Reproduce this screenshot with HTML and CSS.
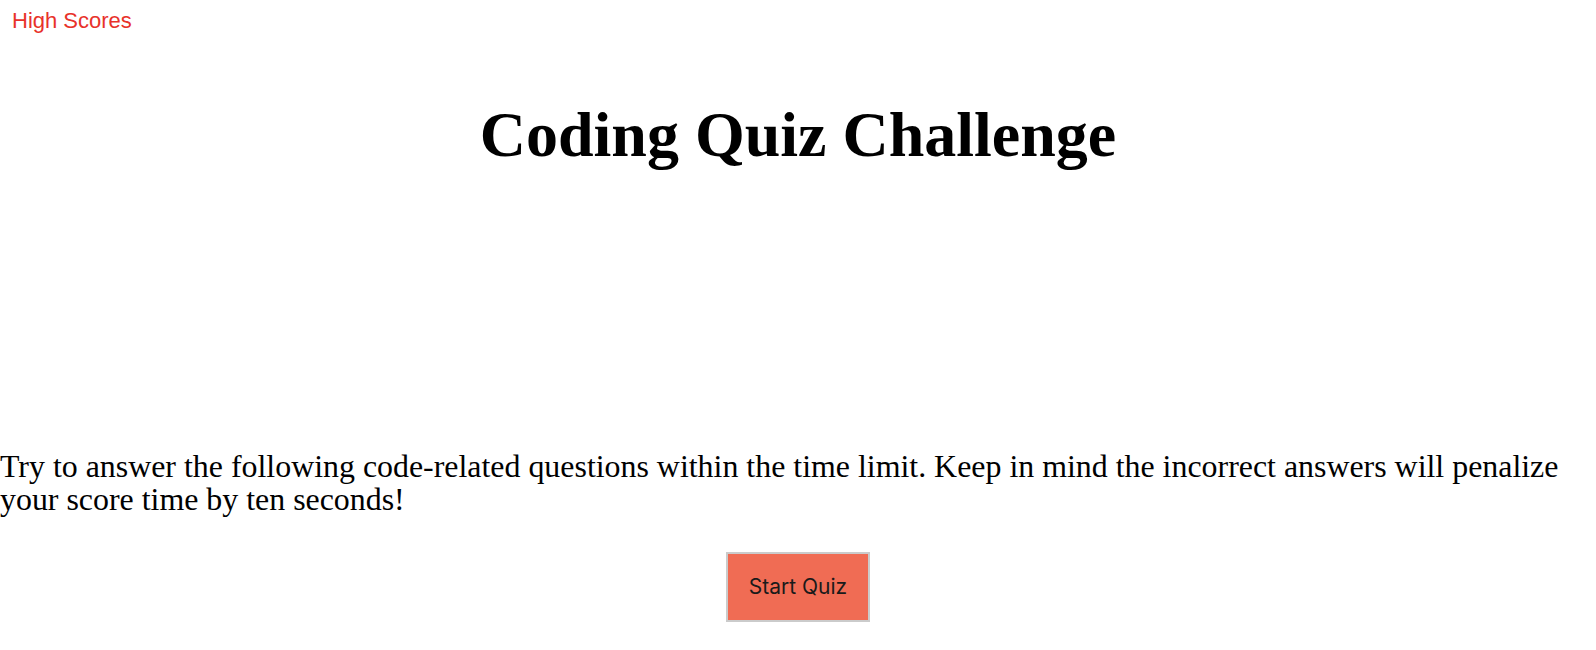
FILE: index.html
```html
<!DOCTYPE html>
<html>
<head>
<meta charset="utf-8">
<link rel="stylesheet" href="styles.css">
</head>
<body>
<header class="topbar"><a class="highscores" href="#">High Scores</a></header>
<main class="intro">
  <h1 class="title">Coding Quiz Challenge</h1>
  <p class="desc">Try to answer the following code-related questions within the time limit. Keep in mind the incorrect answers will penalize your score time by ten seconds!</p>
  <div class="actions"><button class="start">Start Quiz</button></div>
</main>
</body>
</html>
```
FILE: styles.css
```css
html, body { margin: 0; padding: 0; background: #fff; }
body { font-family: "Liberation Serif", "Times New Roman", serif; color: #000; }
.topbar { padding: 8px 12px 0; height: 32px; box-sizing: border-box; }
.highscores { font-family: "Liberation Sans", Arial, sans-serif; font-size: 22px; line-height: 26px; color: #e8322a; text-decoration: none; }
.intro { display: flex; flex-direction: column; }
.title { margin: 66px 0 0; text-align: center; font-size: 64px; font-weight: bold; line-height: 1.15; }
.desc { margin: 278px 0 0; font-size: 31.9px; line-height: 33px; }
.actions { display: flex; justify-content: center; margin-top: 36px; }
.start { box-sizing: border-box; width: 144px; height: 70px; background: #f06c54; border: 2px solid #cbcbcb; font-family: Inter, "Liberation Sans", Arial, sans-serif; font-size: 21px; color: #1a1a1a; padding: 0; }
```
